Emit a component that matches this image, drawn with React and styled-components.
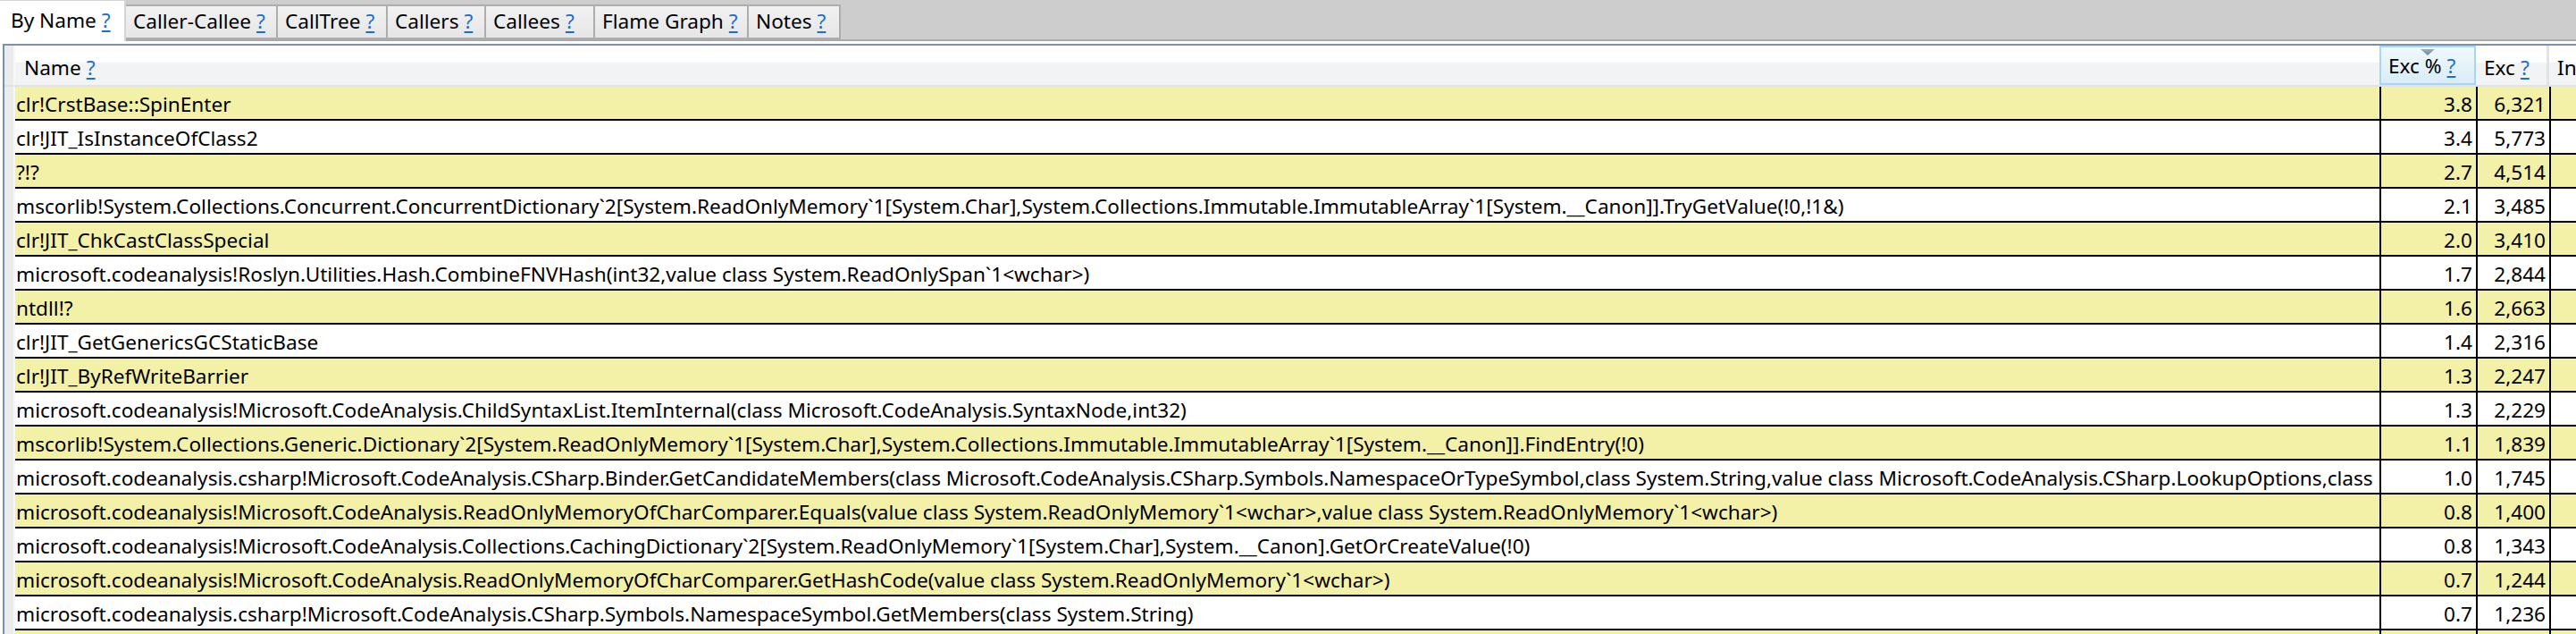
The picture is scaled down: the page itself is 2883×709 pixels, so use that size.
import React from "react";
import styled, { createGlobalStyle } from "styled-components";

const GlobalStyle = createGlobalStyle`
  html, body {
    margin: 0;
    padding: 0;
    background: #ffffff;
    overflow: hidden;
  }
  body {
    font-family: "Noto Sans", "Open Sans", "DejaVu Sans", sans-serif;
    font-size: 22.6px;
    color: #000000;
  }
`;

const Window = styled.div`
  width: 2883px;
  height: 709px;
  overflow: hidden;
  background: #ffffff;
`;

const TabStrip = styled.div`
  display: flex;
  align-items: flex-end;
  height: 44px;
  background: #cdcdcd;
  border-bottom: 2px solid #aaaaaa;
`;

const Tab = styled.div`
  box-sizing: border-box;
  display: flex;
  align-items: center;
  width: ${(p) => p.$w}px;
  height: ${(p) => (p.$active ? 46 : 39)}px;
  margin-bottom: ${(p) => (p.$active ? -2 : 0)}px;
  padding: 0 0 2px ${(p) => (p.$active ? 12 : 8)}px;
  white-space: nowrap;
  overflow: hidden;
  background: ${(p) =>
    p.$active ? "#ffffff" : "linear-gradient(#f2f2f2, #e6e6e6)"};
  border: 2px solid ${(p) => (p.$active ? "#d4d4d4" : "#adadad")};
  border-bottom: ${(p) => (p.$active ? "none" : "2px solid #adadad")};
  border-left: ${(p) => (p.$active ? "none" : "2px solid #adadad")};
  border-top-width: ${(p) => (p.$active ? 1 : 2)}px;
  margin-left: ${(p) => (p.$first ? 0 : -2)}px;
  position: relative;
  z-index: ${(p) => (p.$active ? 1 : 0)};
`;

const Help = styled.span`
  color: #1a6fd0;
  text-decoration: underline;
  text-underline-offset: 3px;
  margin-left: 6px;
`;

const Body = styled.div`
  padding: 3px 0 0 3px;
`;

const Grid = styled.div`
  border-top: 2px solid #7592b5;
  border-left: 2px solid #7592b5;
`;

const Row = styled.div`
  display: grid;
  grid-template-columns: 12px 2646px 108px 82px 40px;
  height: ${(p) => (p.$header ? 46 : 38)}px;
  box-sizing: border-box;
  background: ${(p) => (p.$header ? "#ffffff" : p.$odd ? "#f3f0a7" : "#ffffff")};
  border-bottom: 2px solid ${(p) => (p.$header ? "#e2e2e2" : "#000000")};
`;

const Gutter = styled.div`
  background: #ececec;
  border-right: 2px solid #f7f7f7;
  margin-bottom: ${(p) => (p.$header ? 0 : -2)}px;
`;

const HeaderCell = styled.div`
  position: relative;
  box-sizing: border-box;
  display: flex;
  align-items: flex-end;
  justify-content: flex-start;
  padding: 0 0 4px ${(p) => p.$pad}px;
  white-space: nowrap;
  overflow: hidden;
  background: ${(p) =>
    p.$sorted
      ? "linear-gradient(#f0f8fd 0%, #e6f3fb 45%, #d9ecf8 100%)"
      : "linear-gradient(#ffffff 0%, #ffffff 42%, #f2f3f5 43%, #f2f3f5 100%)"};
  border: ${(p) => (p.$sorted ? "2px solid #a6d6f2" : "none")};
  border-right: ${(p) =>
    p.$sorted ? "2px solid #a6d6f2" : p.$divider ? "3px solid #e3e3e3" : "none"};
`;

const SortArrow = styled.svg`
  position: absolute;
  top: 2px;
  left: 50%;
  margin-left: -8px;
`;

const Cell = styled.div`
  box-sizing: border-box;
  display: flex;
  align-items: center;
  justify-content: ${(p) => (p.$right ? "flex-end" : "flex-start")};
  padding: 0 ${(p) => (p.$right ? 4 : 0)}px 0 ${(p) => (p.$right ? 0 : 1)}px;
  white-space: nowrap;
  overflow: hidden;
  border-left: ${(p) => (p.$sep ? "2px solid #000000" : "none")};
  margin-bottom: -2px;
`;

const rows = [
  ["clr!CrstBase::SpinEnter", "3.8", "6,321"],
  ["clr!JIT_IsInstanceOfClass2", "3.4", "5,773"],
  ["?!?", "2.7", "4,514"],
  [
    "mscorlib!System.Collections.Concurrent.ConcurrentDictionary`2[System.ReadOnlyMemory`1[System.Char],System.Collections.Immutable.ImmutableArray`1[System.__Canon]].TryGetValue(!0,!1&)",
    "2.1",
    "3,485",
  ],
  ["clr!JIT_ChkCastClassSpecial", "2.0", "3,410"],
  [
    "microsoft.codeanalysis!Roslyn.Utilities.Hash.CombineFNVHash(int32,value class System.ReadOnlySpan`1<wchar>)",
    "1.7",
    "2,844",
  ],
  ["ntdll!?", "1.6", "2,663"],
  ["clr!JIT_GetGenericsGCStaticBase", "1.4", "2,316"],
  ["clr!JIT_ByRefWriteBarrier", "1.3", "2,247"],
  [
    "microsoft.codeanalysis!Microsoft.CodeAnalysis.ChildSyntaxList.ItemInternal(class Microsoft.CodeAnalysis.SyntaxNode,int32)",
    "1.3",
    "2,229",
  ],
  [
    "mscorlib!System.Collections.Generic.Dictionary`2[System.ReadOnlyMemory`1[System.Char],System.Collections.Immutable.ImmutableArray`1[System.__Canon]].FindEntry(!0)",
    "1.1",
    "1,839",
  ],
  [
    "microsoft.codeanalysis.csharp!Microsoft.CodeAnalysis.CSharp.Binder.GetCandidateMembers(class Microsoft.CodeAnalysis.CSharp.Symbols.NamespaceOrTypeSymbol,class System.String,value class Microsoft.CodeAnalysis.CSharp.LookupOptions,class M",
    "1.0",
    "1,745",
  ],
  [
    "microsoft.codeanalysis!Microsoft.CodeAnalysis.ReadOnlyMemoryOfCharComparer.Equals(value class System.ReadOnlyMemory`1<wchar>,value class System.ReadOnlyMemory`1<wchar>)",
    "0.8",
    "1,400",
  ],
  [
    "microsoft.codeanalysis!Microsoft.CodeAnalysis.Collections.CachingDictionary`2[System.ReadOnlyMemory`1[System.Char],System.__Canon].GetOrCreateValue(!0)",
    "0.8",
    "1,343",
  ],
  [
    "microsoft.codeanalysis!Microsoft.CodeAnalysis.ReadOnlyMemoryOfCharComparer.GetHashCode(value class System.ReadOnlyMemory`1<wchar>)",
    "0.7",
    "1,244",
  ],
  [
    "microsoft.codeanalysis.csharp!Microsoft.CodeAnalysis.CSharp.Symbols.NamespaceSymbol.GetMembers(class System.String)",
    "0.7",
    "1,236",
  ],
  ["", "", ""],
];

const tabs = [
  ["By Name", 141],
  ["Caller-Callee", 172],
  ["CallTree", 125],
  ["Callers", 112],
  ["Callees", 124],
  ["Flame Graph", 174],
  ["Notes", 105],
];

export default function App() {
  return (
    <Window>
      <GlobalStyle />
      <TabStrip>
        {tabs.map(([label, w], i) => (
          <Tab key={label} $w={w} $active={i === 0} $first={i === 0}>
            {label}
            <Help>?</Help>
          </Tab>
        ))}
      </TabStrip>
      <Body>
        <Grid>
          <Row $header>
            <Gutter $header />
            <HeaderCell $pad={10}>
              Name<Help>?</Help>
            </HeaderCell>
            <HeaderCell $pad={8} $sorted>
              <SortArrow width="16" height="7" viewBox="0 0 16 7">
                <defs>
                  <linearGradient id="arrowFill" x1="0" y1="0" x2="0" y2="1">
                    <stop offset="0" stopColor="#9aaec0" />
                    <stop offset="1" stopColor="#6e8aa3" />
                  </linearGradient>
                </defs>
                <path d="M0 0 H16 L8 7 Z" fill="url(#arrowFill)" />
              </SortArrow>
              Exc %<Help>?</Help>
            </HeaderCell>
            <HeaderCell $pad={9} $divider>
              Exc<Help>?</Help>
            </HeaderCell>
            <HeaderCell $pad={9}>Inc</HeaderCell>
          </Row>
          {rows.map(([name, pct, exc], i) => (
            <Row key={i} $odd={i % 2 === 0}>
              <Gutter />
              <Cell>{name}</Cell>
              <Cell $right $sep>
                {pct}
              </Cell>
              <Cell $right $sep>
                {exc}
              </Cell>
              <Cell $sep />
            </Row>
          ))}
        </Grid>
      </Body>
    </Window>
  );
}
